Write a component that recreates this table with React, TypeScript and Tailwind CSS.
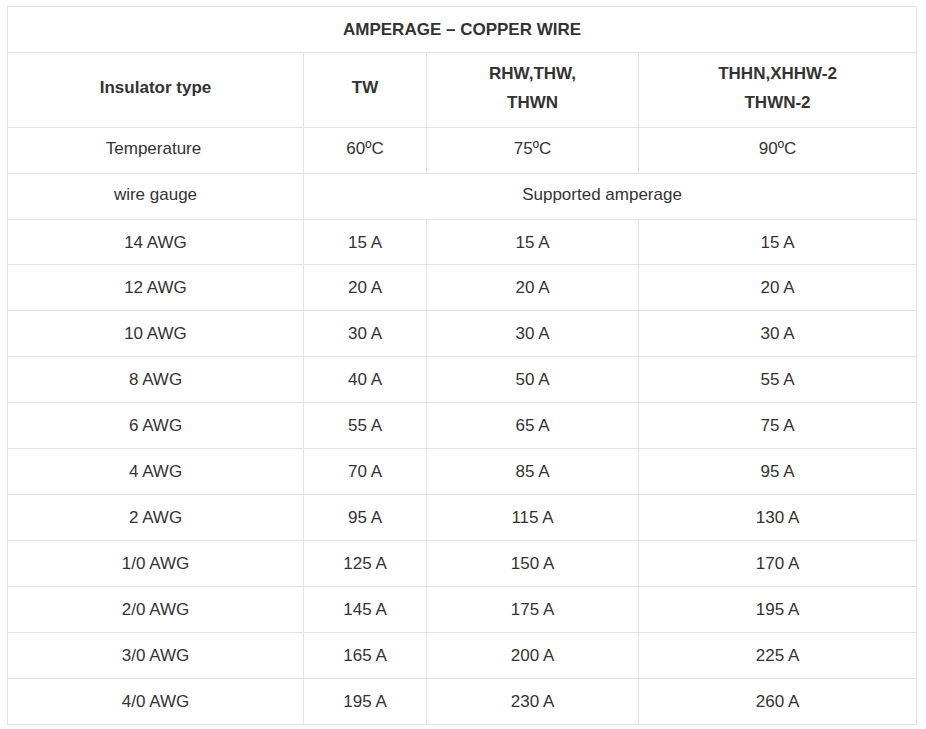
import React from "react";

const rows: [string, string, string, string][] = [
  ["14 AWG", "15 A", "15 A", "15 A"],
  ["12 AWG", "20 A", "20 A", "20 A"],
  ["10 AWG", "30 A", "30 A", "30 A"],
  ["8 AWG", "40 A", "50 A", "55 A"],
  ["6 AWG", "55 A", "65 A", "75 A"],
  ["4 AWG", "70 A", "85 A", "95 A"],
  ["2 AWG", "95 A", "115 A", "130 A"],
  ["1/0 AWG", "125 A", "150 A", "170 A"],
  ["2/0 AWG", "145 A", "175 A", "195 A"],
  ["3/0 AWG", "165 A", "200 A", "225 A"],
  ["4/0 AWG", "195 A", "230 A", "260 A"],
];

const base = "border border-[#e3e3e3] px-2 text-center align-middle leading-[28.9px]";
const td = `${base} pt-[9px] pb-[7px]`;
const tdUp = `${base} pt-[7px] pb-[9px]`;

export default function App() {
  return (
    <div className="bg-white min-h-[729px] pt-[6px] pl-[7px] text-[#333] text-[17px] font-['Liberation_Sans',Arial,sans-serif]">
      <table className="border-collapse table-fixed w-[909px]">
        <colgroup>
          <col className="w-[296px]" />
          <col className="w-[123px]" />
          <col className="w-[212px]" />
          <col className="w-[278px]" />
        </colgroup>
        <tbody>
          <tr>
            <td colSpan={4} className={`${td} font-bold`}>AMPERAGE – COPPER WIRE</td>
          </tr>
          <tr>
            <td className={`${tdUp} font-bold`}>Insulator type</td>
            <td className={`${tdUp} font-bold`}>TW</td>
            <td className={`${tdUp} font-bold`}>
              RHW,THW,
              <br />
              THWN
            </td>
            <td className={`${tdUp} font-bold`}>
              THHN,XHHW-2
              <br />
              THWN-2
            </td>
          </tr>
          <tr>
            <td className={`${tdUp} pr-[12px]`}>Temperature</td>
            <td className={tdUp}>60ºC</td>
            <td className={tdUp}>75ºC</td>
            <td className={tdUp}>90ºC</td>
          </tr>
          <tr>
            <td className={tdUp}>wire gauge</td>
            <td colSpan={3} className={`${tdUp} pr-[24px]`}>Supported amperage</td>
          </tr>
          {rows.map((r) => (
            <tr key={r[0]}>
              {r.map((c, i) => (
                <td key={i} className={td}>{c}</td>
              ))}
            </tr>
          ))}
        </tbody>
      </table>
    </div>
  );
}
